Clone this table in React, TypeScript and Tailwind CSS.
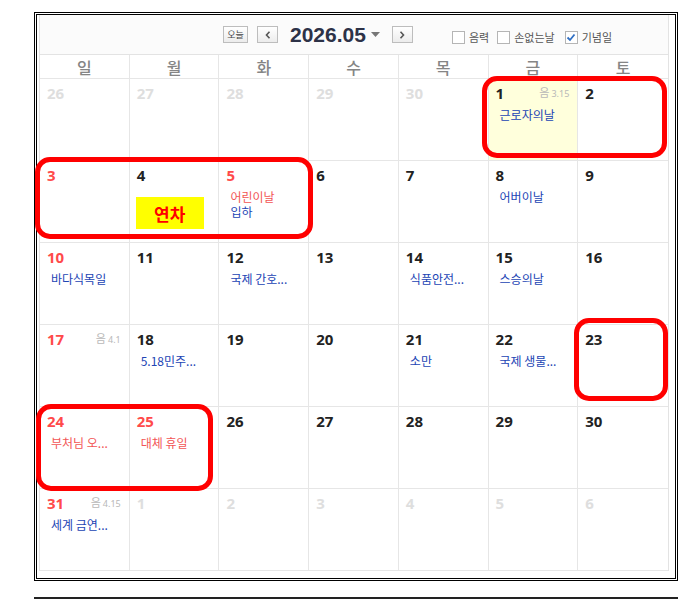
import React from "react";

type Ev = { t: string; red?: boolean };
type Day = {
  n: number;
  other?: boolean;
  red?: boolean;
  lunar?: string;
  events?: Ev[];
  today?: boolean;
  leave?: boolean;
};

const weeks: Day[][] = [
  [
    { n: 26, other: true },
    { n: 27, other: true },
    { n: 28, other: true },
    { n: 29, other: true },
    { n: 30, other: true },
    { n: 1, lunar: "3.15", events: [{ t: "근로자의날" }], today: true },
    { n: 2 },
  ],
  [
    { n: 3, red: true },
    { n: 4, leave: true },
    { n: 5, red: true, events: [{ t: "어린이날", red: true }, { t: "입하" }] },
    { n: 6 },
    { n: 7 },
    { n: 8, events: [{ t: "어버이날" }] },
    { n: 9 },
  ],
  [
    { n: 10, red: true, events: [{ t: "바다식목일" }] },
    { n: 11 },
    { n: 12, events: [{ t: "국제 간호..." }] },
    { n: 13 },
    { n: 14, events: [{ t: "식품안전..." }] },
    { n: 15, events: [{ t: "스승의날" }] },
    { n: 16 },
  ],
  [
    { n: 17, red: true, lunar: "4.1" },
    { n: 18, events: [{ t: "5.18민주..." }] },
    { n: 19 },
    { n: 20 },
    { n: 21, events: [{ t: "소만" }] },
    { n: 22, events: [{ t: "국제 생물..." }] },
    { n: 23 },
  ],
  [
    { n: 24, red: true, events: [{ t: "부처님 오...", red: true }] },
    { n: 25, red: true, events: [{ t: "대체 휴일", red: true }] },
    { n: 26 },
    { n: 27 },
    { n: 28 },
    { n: 29 },
    { n: 30 },
  ],
  [
    { n: 31, red: true, lunar: "4.15", events: [{ t: "세계 금연..." }] },
    { n: 1, other: true },
    { n: 2, other: true },
    { n: 3, other: true },
    { n: 4, other: true },
    { n: 5, other: true },
    { n: 6, other: true },
  ],
];

const days = ["일", "월", "화", "수", "목", "금", "토"];

const KR = { fontFamily: '"Noto Sans CJK KR", "Noto Sans", sans-serif' };
const NUM = { fontFamily: '"Noto Sans", "Noto Sans CJK KR", sans-serif' };

function Checkbox({ checked, label }: { checked?: boolean; label: string }) {
  return (
    <div className="flex items-center">
      <div className="w-[13px] h-[13px] border border-[#b5b5b5] bg-white flex items-center justify-center">
        {checked && (
          <svg width="10" height="9" viewBox="0 0 10 9">
            <path d="M1.5 4.5 L4 7 L8.5 1.5" fill="none" stroke="#2f6fc4" strokeWidth="1.8" />
          </svg>
        )}
      </div>
      <span className="ml-[4px] text-[11px] leading-[13px] text-[#555]" style={KR}>
        {label}
      </span>
    </div>
  );
}

function ArrowBtn({ dir }: { dir: "l" | "r" }) {
  return (
    <div className="w-[21px] h-[17px] border border-[#bdbdbd] bg-gradient-to-b from-white to-[#ececec] flex items-center justify-center">
      <svg width="6" height="8" viewBox="0 0 6 8">
        {dir === "l" ? (
          <path d="M4.5 0.8 L1.5 4 L4.5 7.2" fill="none" stroke="#555" strokeWidth="1.6" />
        ) : (
          <path d="M1.5 0.8 L4.5 4 L1.5 7.2" fill="none" stroke="#555" strokeWidth="1.6" />
        )}
      </svg>
    </div>
  );
}

function Cell({ d, last }: { d: Day; last: boolean }) {
  const numColor = d.other ? "text-[#dedede]" : d.red ? "text-[#ff4a4a]" : "text-[#222]";
  return (
    <div
      className={`h-[82px] border-b border-[#e6e6e6] ${last ? "" : "border-r"} ${
        d.today ? "bg-[#ffffdc]" : "bg-white"
      } pt-[5px] pl-[7px] pr-[8px] overflow-hidden`}
    >
      <div className="flex items-center justify-between h-[18px]">
        <span className={`text-[15px] leading-[18px] font-bold ${numColor}`} style={NUM}>
          {d.n}
        </span>
        {d.lunar && (
          <span className="text-[#b8b8b8] flex items-baseline" style={KR}>
            <span className="text-[11px] leading-[14px]">음</span>
            <span className="text-[9px] leading-[14px] ml-[2px]" style={NUM}>
              {d.lunar}
            </span>
          </span>
        )}
      </div>
      {d.events && (
        <div className="mt-[5px] ml-[4px] flex flex-col">
          {d.events.map((e, i) => (
            <div
              key={i}
              className={`h-[15px] text-[12px] leading-[15px] whitespace-nowrap ${
                e.red ? "text-[#f25555]" : "text-[#2244b4]"
              }`}
              style={KR}
            >
              {e.t}
            </div>
          ))}
        </div>
      )}
      {d.leave && (
        <div
          className="mt-[13px] -ml-[1px] w-[68px] h-[32px] bg-[#ffff00] flex items-center justify-center text-[17px] font-bold text-[#ff0000] leading-none"
          style={KR}
        >
          연차
        </div>
      )}
    </div>
  );
}

export default function App() {
  return (
    <div className="relative w-[697px] h-[599px] bg-white overflow-hidden" style={KR}>
      <div className="ml-[34px] mt-[12px] w-[644px] h-[569px] border-[3px] border-double border-black">
        <div className="ml-[2px] w-[630px] border-l border-r border-[#e3e3e3]">
          {/* header */}
          <div className="h-[40px] border-b border-[#e3e3e3] bg-[#fbfbfb] flex items-center pl-[183px]">
            <div
              className="w-[25px] h-[17px] border border-[#bdbdbd] bg-gradient-to-b from-white to-[#ececec] flex items-center justify-center text-[9px] leading-none text-[#444]"
              style={KR}
            >
              오늘
            </div>
            <div className="ml-[9px]">
              <ArrowBtn dir="l" />
            </div>
            <div
              className="ml-[12px] text-[21px] font-bold leading-none text-[#2d3247]"
              style={{ fontFamily: '"Liberation Sans", Arial, sans-serif' }}
            >
              2026.05
            </div>
            <svg className="ml-[5px]" width="9" height="5" viewBox="0 0 9 5">
              <path d="M0 0 L9 0 L4.5 5 Z" fill="#777" />
            </svg>
            <div className="ml-[12px]">
              <ArrowBtn dir="r" />
            </div>
            <div className="ml-[39px] mt-[6px] flex items-center">
              <Checkbox label="음력" />
              <div className="ml-[8px]">
                <Checkbox label="손없는날" />
              </div>
              <div className="ml-[10px]">
                <Checkbox checked label="기념일" />
              </div>
            </div>
          </div>
          {/* weekday header */}
          <div className="grid grid-cols-7">
            {days.map((d, i) => (
              <div
                key={d}
                className={`h-[24px] border-b border-[#e6e6e6] ${
                  i < 6 ? "border-r" : ""
                } flex items-center justify-center text-[16px] font-medium leading-none text-[#858585] bg-white`}
                style={KR}
              >
                {d}
              </div>
            ))}
          </div>
          {/* weeks */}
          <div className="grid grid-cols-7">
            {weeks.flatMap((w, wi) =>
              w.map((d, di) => <Cell key={`${wi}-${di}`} d={d} last={di === 6} />)
            )}
          </div>
        </div>
      </div>
      <div className="ml-[34px] mt-[16px] w-[644px] h-[2px] bg-[#222]" />

      {/* red annotation boxes */}
      <div className="absolute left-[482px] top-[76px] w-[185px] h-[82px] border-[5px] border-[#ff0000] rounded-[15px]" />
      <div className="absolute left-[35px] top-[157px] w-[278px] h-[82px] border-[5px] border-[#ff0000] rounded-[15px]" />
      <div className="absolute left-[574px] top-[318px] w-[94px] h-[83px] border-[5px] border-[#ff0000] rounded-[15px]" />
      <div className="absolute left-[36px] top-[404px] w-[177px] h-[87px] border-[5px] border-[#ff0000] rounded-[15px]" />
    </div>
  );
}
